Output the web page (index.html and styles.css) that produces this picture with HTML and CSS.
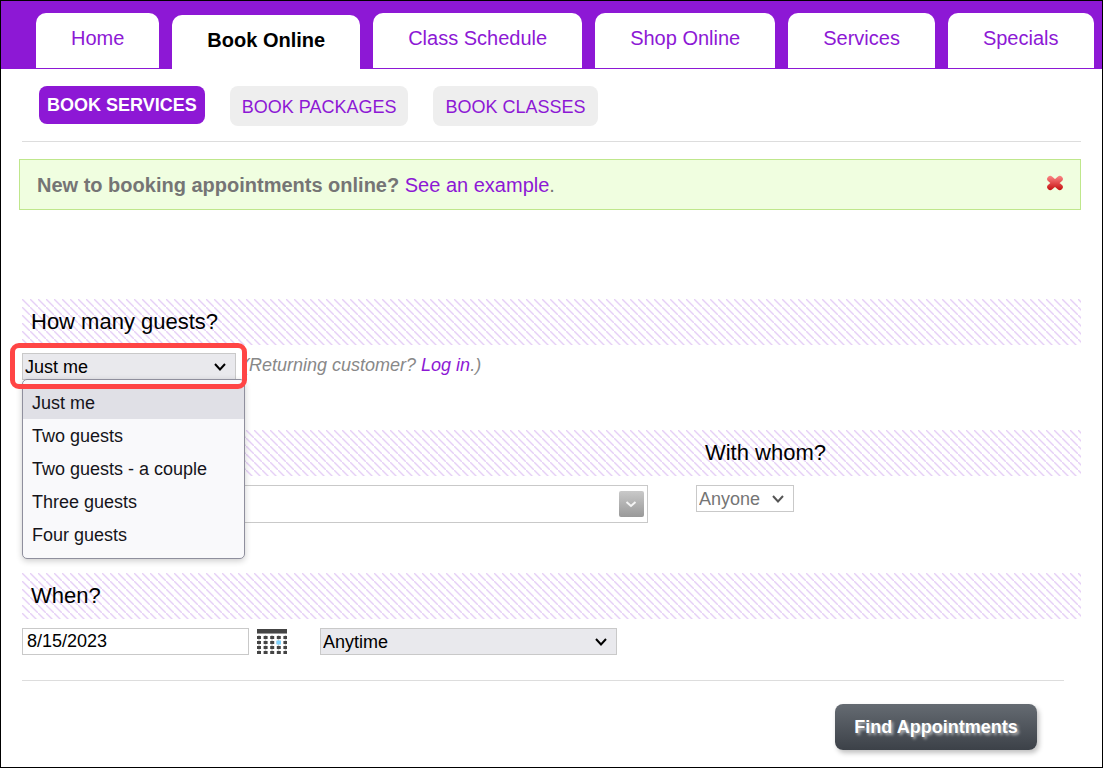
FILE: index.html
```
<!DOCTYPE html>
<html lang="en">
<head>
    <meta charset="UTF-8">
    <meta name="viewport" content="width=device-width, initial-scale=1.0">
    <title>Book Online</title>
    <link rel="stylesheet" href="styles.css">
</head>
<body>
    <nav class="tabs">
        <a href="#">Home</a>
        <a href="#" class="active">Book Online</a>
        <a href="#">Class Schedule</a>
        <a href="#">Shop Online</a>
        <a href="#">Services</a>
        <a href="#">Specials</a>
    </nav>

    <main class="content">
        <nav class="subnav">
            <a href="#" class="active">BOOK SERVICES</a>
            <a href="#">BOOK PACKAGES</a>
            <a href="#">BOOK CLASSES</a>
        </nav>

        <div class="notice">
            <p><strong>New to booking appointments online?</strong> <a href="#">See an example</a>.</p>
            <button type="button" class="close-btn" aria-label="Close">
                <svg width="18" height="16" viewBox="0 0 18 16">
                    <defs>
                        <linearGradient id="closeFill" x1="0" y1="0" x2="0" y2="16" gradientUnits="userSpaceOnUse">
                            <stop offset="0.1" stop-color="#f88080"/>
                            <stop offset="0.5" stop-color="#e24a4a"/>
                            <stop offset="0.9" stop-color="#c81818"/>
                        </linearGradient>
                    </defs>
                    <path d="M4.300 4L13.700 12M13.700 4L4.300 12" stroke="url(#closeFill)" stroke-width="6.200" stroke-linecap="round"/>
                </svg>
            </button>
        </div>

        <form onsubmit="return false">
            <div class="band">
                <h2><label for="guests">How many guests?</label></h2>
            </div>
            <div class="fields guests-row">
                <div class="select guests">
                    <select id="guests">
                        <option>Just me</option>
                        <option>Two guests</option>
                        <option>Two guests - a couple</option>
                        <option>Three guests</option>
                        <option>Four guests</option>
                    </select>
                    <svg class="chevron" width="14" height="10" viewBox="0 0 14 10"><path d="M2 2l5 5.500 5-5.500"/></svg>
                    <ul class="menu" role="listbox" aria-label="How many guests?">
                        <li role="option" aria-selected="true" class="selected">Just me</li>
                        <li role="option">Two guests</li>
                        <li role="option">Two guests - a couple</li>
                        <li role="option">Three guests</li>
                        <li role="option">Four guests</li>
                    </ul>
                    <div class="highlight"></div>
                </div>
                <p class="hint">(Returning customer? <a href="#">Log in</a>.)</p>
            </div>

            <div class="band split">
                <h2 class="whom"><label for="whom">With whom?</label></h2>
            </div>
            <div class="fields split">
                <div class="service">
                    <input type="text" aria-label="Service">
                    <button type="button" class="drop-btn" aria-label="Show services">
                        <svg width="12" height="8" viewBox="0 0 12 8"><path d="M1.500 2L6 6l4.500-4"/></svg>
                    </button>
                </div>
                <div class="select whom-select">
                    <select id="whom">
                        <option>Anyone</option>
                    </select>
                    <svg class="chevron" width="14" height="10" viewBox="0 0 14 10"><path d="M2 2l5 5.500 5-5.500"/></svg>
                </div>
            </div>

            <div class="band">
                <h2><label for="date">When?</label></h2>
            </div>
            <div class="fields when-row">
                <input type="text" id="date" value="8/15/2023">
                <button type="button" class="calendar-btn" aria-label="Open calendar">
                    <svg width="30" height="25" viewBox="0 0 30 25">
                        <path d="M0 2h30" stroke="#444" stroke-width="4"/>
                        <path d="M0 4.500h30" stroke="#999"/>
                        <g stroke="#ccc" stroke-width="1.500">
                            <path d="M2 6v19M8.500 6v19M15 6v19M21.500 6v19M28.500 6v19"/>
                        </g>
                        <g stroke="#444" stroke-width="3" stroke-dasharray="4 2.600">
                            <path d="M0 8.500h30M0 13.500h30M0 18.500h30M0 23.500h30"/>
                        </g>
                        <rect x="19.500" y="11.500" width="4.500" height="4" fill="#7fd4ff"/>
                    </svg>
                </button>
                <div class="select time">
                    <select aria-label="Time">
                        <option>Anytime</option>
                    </select>
                    <svg class="chevron" width="14" height="10" viewBox="0 0 14 10"><path d="M2 2l5 5.500 5-5.500"/></svg>
                </div>
            </div>

            <div class="actions">
                <button type="submit" class="find-btn">Find Appointments</button>
            </div>
        </form>
    </main>
</body>
</html>
```
FILE: styles.css
```
* {
    box-sizing: border-box;
}

body {
    font-family: "Liberation Sans", Arial, sans-serif;
    font-size: 18px;
    margin: 0;
    min-height: 100vh;
    border: 1px solid #000;
    background-color: #fff;
    color: #000;
}

a {
    color: #8d18d5;
    text-decoration: none;
}

h2, p, ul {
    margin: 0;
    padding: 0;
}

/* Main tabs */
.tabs {
    display: flex;
    align-items: flex-end;
    gap: 13px;
    height: 68px;
    padding-left: 35px;
    background-color: #8d18d5;
}

.tabs a {
    height: 55px;
    margin-bottom: 1px;
    padding: 0 35px;
    border-radius: 10px 10px 0 0;
    background-color: #fff;
    font-size: 20px;
    line-height: 50px;
    white-space: nowrap;
}

.tabs .active {
    height: 54px;
    margin-bottom: 0;
    color: #000;
    font-weight: bold;
}

.content {
    padding: 0 21px;
}

/* Sub navigation */
.subnav {
    display: flex;
    align-items: flex-start;
    gap: 25px;
    height: 73px;
    padding: 17px 17px 0;
    border-bottom: 1px solid #ddd;
}

.subnav a {
    height: 40px;
    padding: 0 12px;
    border-radius: 8px;
    background-color: #eee;
    line-height: 42px;
}

.subnav .active {
    height: 38px;
    padding: 0 8px;
    background-color: #8d18d5;
    color: #fff;
    font-weight: bold;
    line-height: 38px;
}

.notice {
    display: flex;
    align-items: center;
    justify-content: space-between;
    height: 51px;
    margin: 17px 0 89px -3px;
    padding: 0 16px 0 17px;
    border: 1px solid #bfe78c;
    background-color: #f0fee0;
    color: #757575;
    font-size: 20px;
    line-height: 24px;
}

button {
    padding: 0;
    border: none;
    background: none;
    cursor: pointer;
}

button svg {
    display: block;
}

.close-btn {
    margin-bottom: 4px;
}

/* Section headings on stripes */
.band {
    height: 46px;
    padding: 0 9px;
    background-image: linear-gradient(45deg, #fff 37%, #e6d0f6 50%, #fff 63%);
    background-size: 8px 8px;
}

.band h2 {
    font-size: 22px;
    font-weight: normal;
    line-height: 46px;
}

.split {
    display: grid;
    grid-template-columns: 7fr 4fr;
    align-items: start;
}

.band.split {
    padding: 0;
}

.whom {
    grid-column: 2;
    padding-left: 9px;
}

.fields {
    margin: 9px 0 50px;
}

.guests-row,
.when-row {
    display: flex;
    align-items: center;
}

.guests-row {
    margin-top: 8px;
}

input,
select {
    display: block;
    width: 100%;
    height: 27px;
    padding: 0 4px;
    border: 1px solid #c9c9c9;
    border-radius: 0;
    background-color: #fff;
    color: #000;
    font-family: inherit;
    font-size: 18px;
}

select {
    appearance: none;
    padding: 0 2px;
    background-color: #e9e9ed;
}

.select {
    position: relative;
}

.chevron {
    position: absolute;
    top: 9px;
    right: 9px;
    fill: none;
    stroke: #000;
    stroke-width: 2;
    pointer-events: none;
}

.guests {
    width: 214px;
}

/* Open guest list */
.menu {
    position: absolute;
    top: 26px;
    left: 0;
    z-index: 1;
    width: 223px;
    padding: 6px 0 7px;
    border: 1px solid #8f8f9d;
    border-radius: 5px;
    background-color: #f9f9fb;
    box-shadow: 0 2px 6px rgba(0, 0, 0, 0.2);
    color: #15141a;
    list-style: none;
}

.menu li {
    height: 33px;
    padding: 0 9px;
    line-height: 35px;
}

.menu .selected {
    background-color: #e0e0e6;
}

.highlight {
    position: absolute;
    top: -10px;
    left: -12px;
    z-index: 2;
    width: 237px;
    height: 46px;
    border: 5px solid #ff4545;
    border-radius: 9px;
    pointer-events: none;
}

.hint {
    margin-left: 7px;
    padding-bottom: 3px;
    color: #888;
    font-style: italic;
}

.service {
    position: relative;
    margin-right: 48px;
}

.service input {
    height: 38px;
    padding-right: 32px;
}

.drop-btn {
    position: absolute;
    top: 6px;
    right: 4px;
    display: flex;
    align-items: center;
    justify-content: center;
    width: 25px;
    height: 26px;
    border-radius: 2px;
    background: linear-gradient(#c9c9c9, #999);
}

.drop-btn path {
    fill: none;
    stroke: #f4f4f4;
    stroke-width: 2;
}

.whom-select {
    width: 98px;
}

.whom-select select {
    background-color: #fff;
    color: #757575;
}

.whom-select .chevron {
    stroke: #555;
}

.when-row {
    margin-bottom: 25px;
}

.when-row input {
    width: 227px;
}

.calendar-btn {
    margin: 0 33px 0 8px;
}

.time {
    width: 297px;
}

.actions {
    display: flex;
    justify-content: flex-end;
    margin-right: 17px;
    padding: 23px 27px 17px 0;
    border-top: 1px solid #ddd;
}

.find-btn {
    width: 202px;
    height: 46px;
    border-radius: 8px;
    background: linear-gradient(#656b72, #3c4148);
    box-shadow: 2px 3px 5px rgba(0, 0, 0, 0.25);
    color: #fff;
    font-family: inherit;
    font-size: 18px;
    font-weight: bold;
    text-shadow: 2px 2px 3px rgba(255, 255, 255, 0.6);
}
```
